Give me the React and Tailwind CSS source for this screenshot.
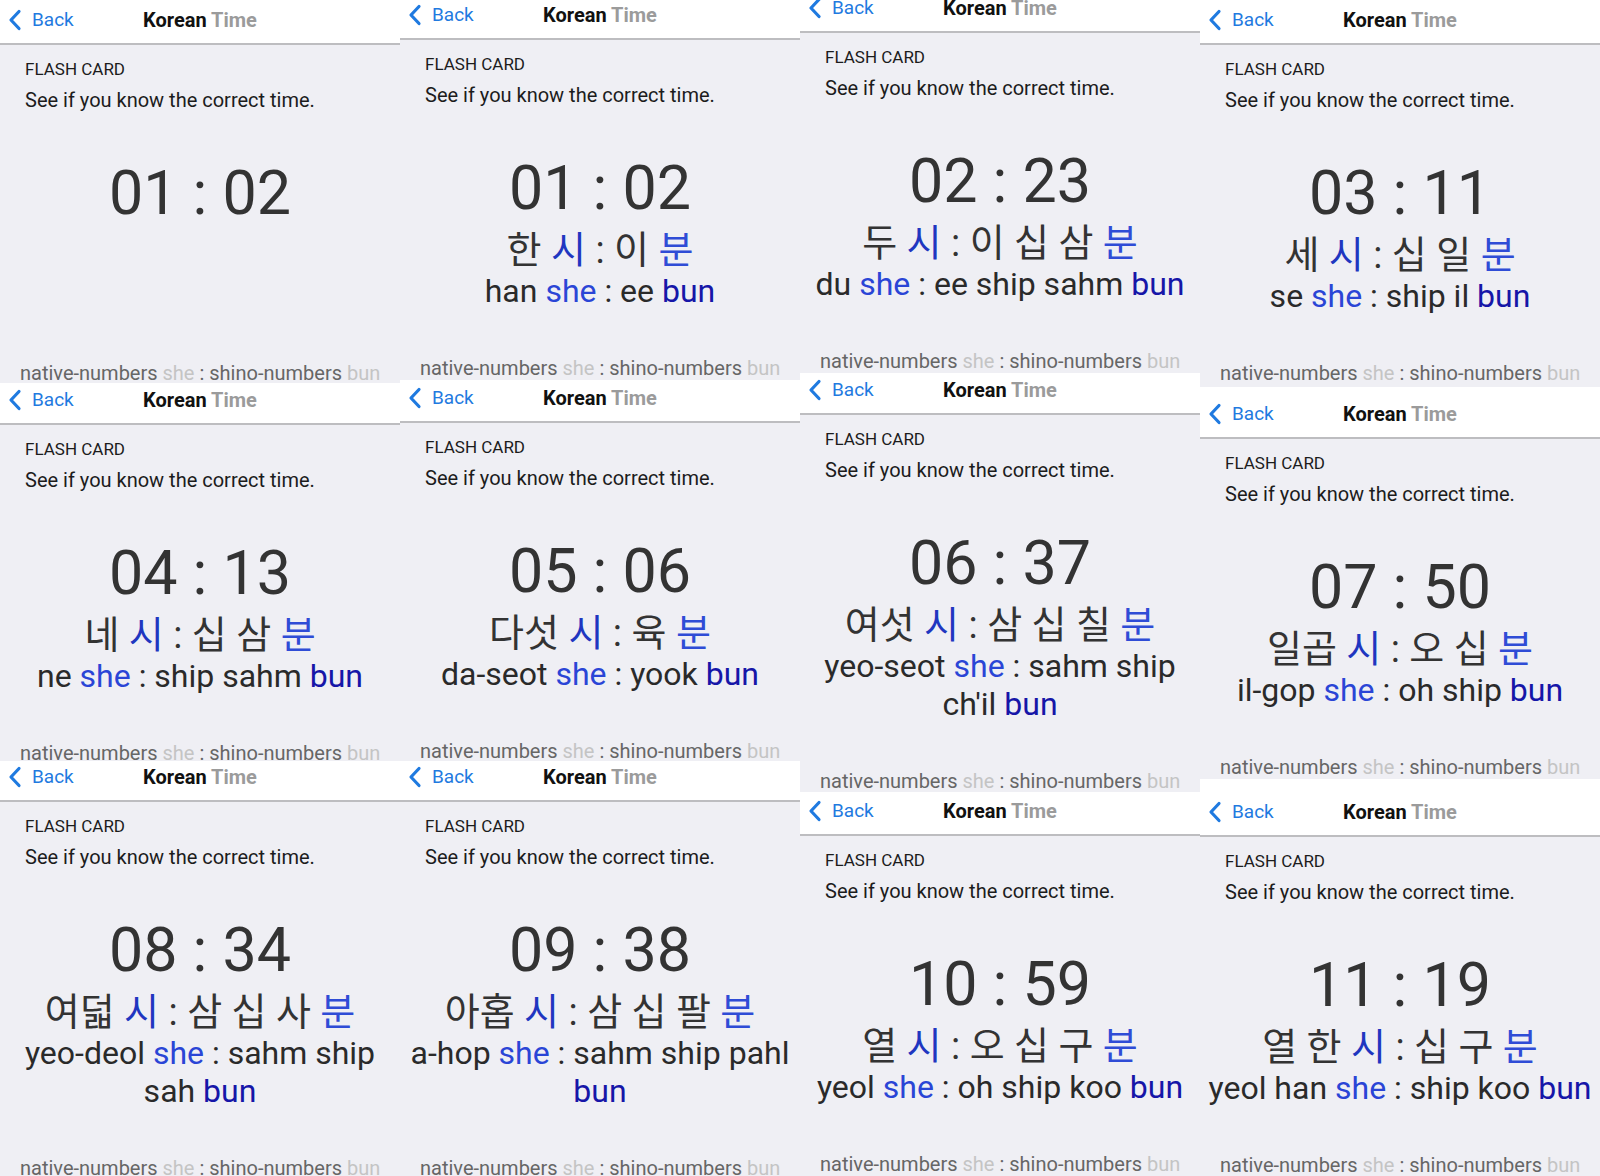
const FONT = "font-['Roboto','Noto_Sans_CJK_KR',sans-serif]";

// [header height, content height, card]
const COLUMNS = [
  [
    [45, 338, { time: '01 : 02', hidden: true, koH: '한', koM: '이', roH: 'han', roM: 'ee' }],
    [42, 336, { time: '04 : 13', koH: '네', koM: '십 삼', roH: 'ne', roM: 'ship sahm' }],
    [41, 374, { time: '08 : 34', koH: '여덟', koM: '삼 십 사', roH: 'yeo-deol', roM: 'sahm ship\nsah' }],
  ],
  [
    [40, 340, { time: '01 : 02', koH: '한', koM: '이', roH: 'han', roM: 'ee' }],
    [43, 338, { time: '05 : 06', koH: '다섯', koM: '육', roH: 'da-seot', roM: 'yook' }],
    [41, 374, { time: '09 : 38', koH: '아홉', koM: '삼 십 팔', roH: 'a-hop', roM: 'sahm ship pahl\n' }],
  ],
  [
    [33, 340, { time: '02 : 23', koH: '두', koM: '이 십 삼', roH: 'du', roM: 'ee ship sahm' }],
    [42, 377, { time: '06 : 37', koH: '여섯', koM: '삼 십 칠', roH: 'yeo-seot', roM: "sahm ship\nch'il" }],
    [44, 340, { time: '10 : 59', koH: '열', koM: '오 십 구', roH: 'yeol', roM: 'oh ship koo' }],
  ],
  [
    [45, 342, { time: '03 : 11', koH: '세', koM: '십 일', roH: 'se', roM: 'ship il' }],
    [52, 340, { time: '07 : 50', koH: '일곱', koM: '오 십', roH: 'il-gop', roM: 'oh ship' }],
    [58, 339, { time: '11 : 19', koH: '열 한', koM: '십 구', roH: 'yeol han', roM: 'ship koo' }],
  ],
];

function Chevron() {
  return (
    <svg width="14" height="22" viewBox="0 0 14 22" fill="none">
      <path d="M11 2.5L3 11l8 8.5" stroke="#1f7ae0" strokeWidth="3.2" strokeLinecap="round" strokeLinejoin="round" />
    </svg>
  );
}

function Header({ h }) {
  return (
    <div className="flex flex-col justify-end overflow-hidden bg-white border-b-2 border-[#bdbdc0] shrink-0" style={{ height: h }}>
      <div className="grid grid-cols-[1fr_auto_1fr] items-center h-[46px] shrink-0">
        <div className="flex items-center pl-[8px] gap-[10px] text-[#1f7ae0] text-[19px]">
          <Chevron />
          <span>Back</span>
        </div>
        <div className="text-[20px] font-bold">
          <span className="text-[#111]">Korean</span> <span className="text-[#9b9b9b]">Time</span>
        </div>
        <div />
      </div>
    </div>
  );
}

function Card({ card }) {
  return (
    <div className="flex flex-col pt-[12px]">
      <div className="px-[25px] text-[17px] leading-[24px] text-[#1c1c1c]">FLASH CARD</div>
      <div className="px-[25px] mt-[6px] text-[20px] leading-[26px] text-[#1c1c1c]">See if you know the correct time.</div>
      <div className="mt-[48px] text-center text-[61px] leading-[64px] text-[#333]">{card.time}</div>
      <div className={card.hidden ? 'invisible' : ''}>
        <div className="mt-[8px] text-center text-[38px] leading-[44px] text-[#333] whitespace-nowrap">
          {card.koH} <span className="text-[#2036c0]">시</span> : {card.koM} <span className="text-[#2f4cd6]">분</span>
        </div>
        <div className="text-center text-[32px] leading-[38px] text-[#2a2a2a] whitespace-pre-line">
          {card.roH} <span className="text-[#2a45d6]">she</span> : {card.roM} <span className="text-[#1616a8]">bun</span>
        </div>
      </div>
      <div className="mt-[46px] px-[20px] text-[20px] leading-[24px] text-[#666] whitespace-nowrap">
        native-numbers <span className="text-[#c4c4c4]">she</span> : shino-numbers <span className="text-[#c4c4c4]">bun</span>
      </div>
    </div>
  );
}

function Panel({ h, c, card }) {
  return (
    <div className="flex flex-col">
      <Header h={h} />
      <div className="bg-[#efeff4] overflow-hidden" style={{ height: c }}>
        <Card card={card} />
      </div>
    </div>
  );
}

export default function App() {
  return (
    <div className={`${FONT} w-[1600px] h-[1176px] overflow-hidden grid grid-cols-4 bg-[#efeff4]`}>
      {COLUMNS.map((col, i) => (
        <div key={i} className="flex flex-col w-[400px] overflow-hidden">
          {col.map(([h, c, card], j) => (
            <Panel key={j} h={h} c={c} card={card} />
          ))}
        </div>
      ))}
    </div>
  );
}
